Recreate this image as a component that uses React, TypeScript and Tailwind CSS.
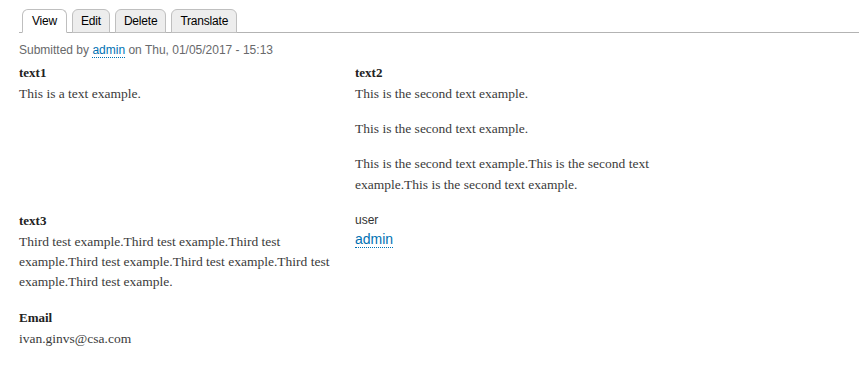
import React from "react"

const Tab = ({ label, active }: { label: string; active?: boolean }) => (
    <li
        className={
            active
                ? "-mb-px h-[24px] px-[9px] flex items-center border border-[#bfbfbf] border-b-white bg-white rounded-t-[6px]"
                : "-mb-px h-[24px] px-[8px] flex items-center border border-[#bfbfbf] bg-[#ededed] rounded-t-[6px]"
        }
    >
        <span className="text-[12px] text-black leading-none tracking-[-0.2px]">{label}</span>
    </li>
)

const Label = ({ children }: { children: React.ReactNode }) => (
    <div className="font-bold text-[13px] leading-[21px] text-[#222]">{children}</div>
)

export default function App() {
    return (
        <div className="min-h-screen bg-white pl-[19px] pr-[4px] pt-[9px] font-['Liberation_Sans',Arial,sans-serif]">
            {/* Tabs */}
            <ul className="flex gap-[5px] pl-[3px] border-b border-[#b3b3b3]">
                <Tab label="View" active />
                <Tab label="Edit" />
                <Tab label="Delete" />
                <Tab label="Translate" />
            </ul>

            <div className="mt-[9px] text-[12px] leading-[16px] text-[#68696b]">
                Submitted by{" "}
                <a className="text-[#0071b3] border-b border-dotted border-[#0071b3]">admin</a> on Thu, 01/05/2017 - 15:13
            </div>

            <div className="mt-[4px] grid grid-cols-[336px_336px] font-['Liberation_Serif',serif] text-[13.5px] leading-[21px] text-[#3b3b3b]">
                <div className="pr-[16px]">
                    <Label>text1</Label>
                    <p>This is a text example.</p>
                </div>
                <div className="pr-[16px]">
                    <Label>text2</Label>
                    <p className="mb-[14px]">This is the second text example.</p>
                    <p className="mb-[14px]">This is the second text example.</p>
                    <p>This is the second text example.This is the second text example.This is the second text example.</p>
                </div>

                <div className="pr-[16px] mt-[15px]">
                    <Label>text3</Label>
                    <p className="leading-[20px] mt-[1px]">
                        Third test example.Third test example.Third test example.Third test example.Third test example.Third test example.Third test example.
                    </p>
                    <div className="mt-[15px]">
                        <Label>Email</Label>
                        <p>ivan.ginvs@csa.com</p>
                    </div>
                </div>
                <div className="pr-[16px] mt-[16px] font-['Liberation_Sans',Arial,sans-serif]">
                    <div className="text-[12px] leading-[18px] text-[#333]">user</div>
                    <a className="text-[14px] leading-[18px] text-[#0071b3] border-b border-dotted border-[#0071b3]">admin</a>
                </div>
            </div>
        </div>
    )
}
